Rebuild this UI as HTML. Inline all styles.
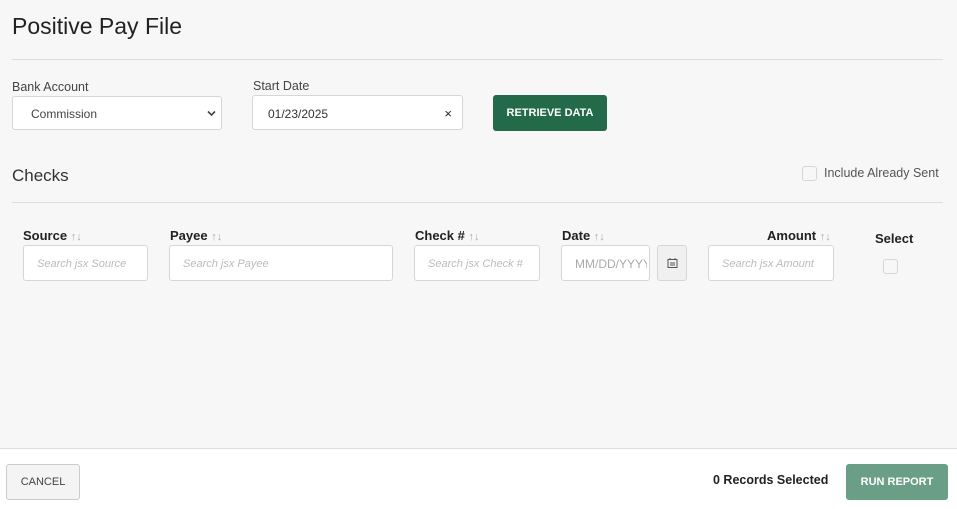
<!DOCTYPE html>
<html><head><style>
*{box-sizing:border-box;margin:0;padding:0}
body{width:957px;height:509px;background:#f7f7f7;font-family:"Liberation Sans",sans-serif;position:relative;overflow:hidden;color:#222}
.a{position:absolute}
.box{position:absolute;background:#fff;border:1px solid #d4d6d9;border-radius:3px}
.lbl{position:absolute;font-size:12.5px;color:#444}
.th{position:absolute;font-size:13px;font-weight:bold;color:#222}
.th span{color:#aaa;font-weight:normal;font-size:11px}
.ph{position:absolute;font-size:11px;font-style:italic;color:#bbb;top:12px;left:13px;white-space:nowrap;overflow:hidden}
</style></head><body>
<div class="a" style="left:12px;top:13px;font-size:23px;color:#222">Positive Pay File</div>
<div class="a" style="left:12px;top:59px;width:931px;height:1px;background:#ddd"></div>
<div class="lbl" style="left:12px;top:80px">Bank Account</div>
<div class="box" style="left:12px;top:96px;width:210px;height:34px"><span class="a" style="left:18px;top:10px;font-size:12px;color:#444">Commission</span><svg class="a" style="right:5px;top:13px" width="9" height="7" viewBox="0 0 9 7"><path d="M1 1.5L4.5 5L8 1.5" fill="none" stroke="#444" stroke-width="1.6"/></svg></div>
<div class="lbl" style="left:253px;top:79px">Start Date</div>
<div class="box" style="left:252px;top:95px;width:211px;height:35px"><span class="a" style="left:15px;top:11px;font-size:12px;color:#333">01/23/2025</span><span class="a" style="right:10px;top:10px;font-size:13px">×</span></div>
<div class="a" style="left:493px;top:95px;width:114px;height:36px;background:#236a48;border-radius:3px;color:#fff;font-size:11px;font-weight:bold;text-align:center;line-height:36px">RETRIEVE DATA</div>
<div class="a" style="left:12px;top:166px;font-size:17px;color:#333">Checks</div>
<div class="box" style="left:802px;top:166px;width:15px;height:15px;border-radius:3px;background:#f7f7f7"></div>
<div class="lbl" style="left:824px;top:166px;font-size:12.5px;color:#555">Include Already Sent</div>
<div class="a" style="left:12px;top:202px;width:931px;height:1px;background:#ddd"></div>
<div class="th" style="left:23px;top:228px">Source <span>↑↓</span></div>
<div class="box" style="left:23px;top:245px;width:125px;height:36px"><span class="ph">Search jsx Source</span></div>
<div class="th" style="left:170px;top:228px">Payee <span>↑↓</span></div>
<div class="box" style="left:169px;top:245px;width:224px;height:36px"><span class="ph">Search jsx Payee</span></div>
<div class="th" style="left:415px;top:228px">Check # <span>↑↓</span></div>
<div class="box" style="left:414px;top:245px;width:126px;height:36px"><span class="ph">Search jsx Check #</span></div>
<div class="th" style="left:562px;top:228px">Date <span>↑↓</span></div>
<div class="box" style="left:561px;top:245px;width:89px;height:36px"><span class="ph" style="font-style:normal;color:#aaa;right:2px;font-size:12px;top:11px">MM/DD/YYYY</span></div>
<div class="box" style="left:657px;top:245px;width:30px;height:36px;background:#f0f0f0"><svg class="a" style="left:9px;top:12px" width="11" height="11" viewBox="0 0 11 11"><rect x="1" y="1.5" width="9" height="8" fill="none" stroke="#555"/><line x1="3" y1="0" x2="3" y2="2" stroke="#555"/><line x1="8" y1="0" x2="8" y2="2" stroke="#555"/><line x1="3" y1="5" x2="8" y2="5" stroke="#555"/><line x1="3" y1="7" x2="8" y2="7" stroke="#555"/></svg></div>
<div class="th" style="left:767px;top:228px">Amount <span>↑↓</span></div>
<div class="box" style="left:708px;top:245px;width:126px;height:36px"><span class="ph">Search jsx Amount</span></div>
<div class="th" style="left:875px;top:231px">Select</div>
<div class="box" style="left:883px;top:259px;width:15px;height:15px;border-radius:3px;background:#f7f7f7"></div>
<div class="a" style="left:0;top:448px;width:957px;height:61px;background:#fff;border-top:1px solid #ddd"></div>
<div class="a" style="left:6px;top:464px;width:74px;height:36px;background:#f4f4f4;border:1px solid #ccc;border-radius:3px;font-size:11px;color:#444;text-align:center;line-height:34px">CANCEL</div>
<div class="a" style="left:713px;top:473px;font-size:12.5px;font-weight:bold;color:#222">0 Records Selected</div>
<div class="a" style="left:846px;top:464px;width:102px;height:36px;background:#6a9e86;border-radius:3px;color:#fff;font-size:11px;font-weight:bold;text-align:center;line-height:36px">RUN REPORT</div>
</body></html>
